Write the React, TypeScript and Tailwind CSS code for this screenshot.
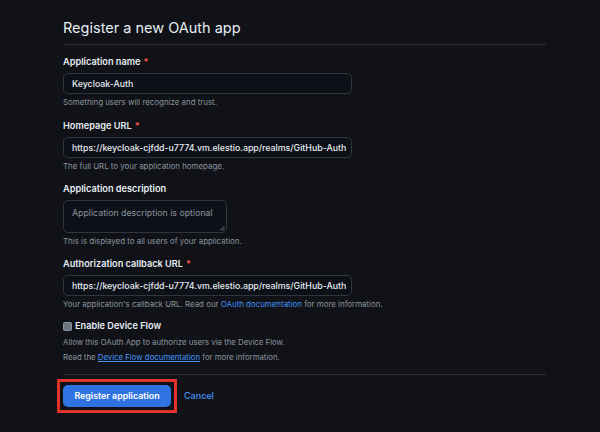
const font = { fontFamily: "Inter, 'Liberation Sans', sans-serif" };

function Label({ children, required }: { children: React.ReactNode; required?: boolean }) {
  return (
    <div className="h-[14px] text-[9.2px] leading-[14px] font-semibold text-[#e6edf3]">
      {children}
      {required && <span className="ml-[3px] text-[#f85149]">*</span>}
    </div>
  );
}

function Help({ children }: { children: React.ReactNode }) {
  return <div className="mt-[2px] h-[12px] text-[7.9px] leading-[12px] text-[#8b949e]">{children}</div>;
}

function TextInput({ value }: { value: string }) {
  return (
    <div className="mt-[4px] flex h-[21px] w-[289px] items-center overflow-hidden whitespace-nowrap rounded-[5px] border border-[#30363d] bg-[#0d1017] px-[8px] text-[8.8px] font-medium text-[#e6edf3]">
      {value}
    </div>
  );
}

export default function App() {
  return (
    <div className="min-h-[432px] w-[600px] bg-[#101217] pl-[63px] pt-[16px]" style={font}>
      <div className="w-[483px]">
        <h1 className="border-b border-[#2d3139] pb-[4px] text-[14.5px] leading-[24px] font-normal text-[#e6edf3]">
          Register a new OAuth app
        </h1>

        <div className="mt-[10px]">
          <Label required>Application name</Label>
          <TextInput value="Keycloak-Auth" />
          <Help>Something users will recognize and trust.</Help>
        </div>

        <div className="mt-[11px]">
          <Label required>Homepage URL</Label>
          <TextInput value="https://keycloak-cjfdd-u7774.vm.elestio.app/realms/GitHub-Auth" />
          <Help>The full URL to your application homepage.</Help>
        </div>

        <div className="mt-[10px]">
          <Label>Application description</Label>
          <div className="relative mt-[4px] h-[33px] w-[164px] rounded-[5px] border border-[#30363d] bg-[#0d1017] px-[8px] pt-[5px] text-[8.8px] leading-[14px] whitespace-nowrap text-[#8b949e]">
            Application description is optional
            <svg className="absolute bottom-[1px] right-[1px]" width="6" height="6" viewBox="0 0 6 6">
              <path d="M5.5 1 L1 5.5 M5.5 3.5 L3.5 5.5" stroke="#8b949e" strokeWidth="0.8" />
            </svg>
          </div>
          <Help>This is displayed to all users of your application.</Help>
        </div>

        <div className="mt-[10px]">
          <Label required>Authorization callback URL</Label>
          <TextInput value="https://keycloak-cjfdd-u7774.vm.elestio.app/realms/GitHub-Auth" />
          <Help>
            Your application's callback URL. Read our{" "}
            <span className="text-[#4493f8]">OAuth documentation</span> for more information.
          </Help>
        </div>

        <div className="mt-[9px] flex h-[14px] items-center gap-[3px]">
          <span className="h-[9px] w-[9px] rounded-[1.5px] border border-[#8b949e] bg-[#6e7681]" />
          <span className="text-[9.2px] leading-[14px] font-semibold text-[#e6edf3]">Enable Device Flow</span>
        </div>
        <div className="mt-[2px] text-[7.8px] leading-[15px] text-[#8b949e]">
          <div>Allow this OAuth App to authorize users via the Device Flow.</div>
          <div>
            Read the <span className="text-[#4493f8] underline">Device Flow documentation</span> for more information.
          </div>
        </div>

        <div className="mt-[9px] border-t border-[#2d3139]" />

        <div className="mt-[10px] flex items-center gap-[13px]">
          <button className="relative h-[22px] w-[108px] rounded-[5px] bg-[#2f73e3] text-[8.9px] font-semibold text-white">
            Register application
            <span className="pointer-events-none absolute -inset-[6px] border-[3px] border-[#e3312b]" />
          </button>
          <span className="text-[9px] font-medium text-[#4493f8]">Cancel</span>
        </div>
      </div>
    </div>
  );
}
